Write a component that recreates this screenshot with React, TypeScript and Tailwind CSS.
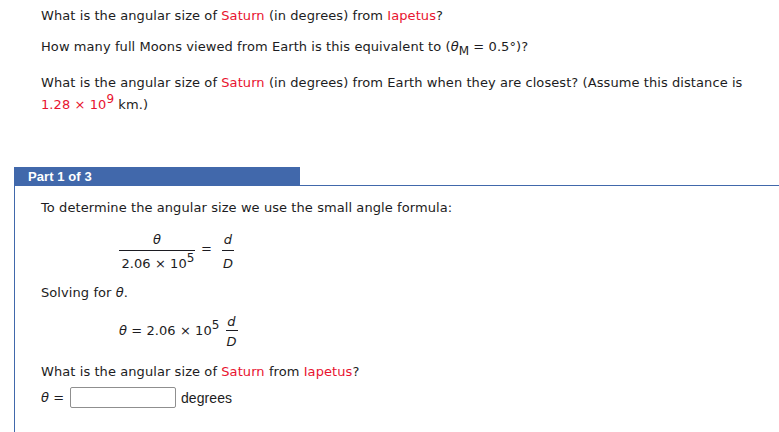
import React from "react";

const R = ({ children }: { children: React.ReactNode }) => (
  <span className="text-[#e8132f]">{children}</span>
);

const Th = () => <i className="font-['DejaVu_Sans']">θ</i>;

export default function App() {
  return (
    <div className="w-[779px] h-[432px] overflow-hidden bg-white text-[#1c1c22] text-[13px] leading-[16px] tracking-[0.08px] font-['DejaVu_Sans',sans-serif]">
      <div className="pl-[41px] pt-[8px]">
        <p>
          What is the angular size of <R>Saturn</R> (in degrees) from <R>Iapetus</R>?
        </p>
        <p className="mt-[15px]">
          How many full Moons viewed from Earth is this equivalent to (<Th />
          <sub className="text-[12px] relative top-[4px]">M</sub> = 0.5°)?
        </p>
        <p className="mt-[17px] leading-[22px]">
          What is the angular size of <R>Saturn</R> (in degrees) from Earth when they are closest? (Assume this distance is
          <br />
          <R>
            1.28 × 10<sup className="text-[12px] relative -top-[6px]">9</sup>
          </R>{" "}
          km.)
        </p>
      </div>

      <div className="mt-[51px] flex items-end pl-[14px]">
        <div className="w-[286px] h-[19px] bg-[#4168ab] pl-[14px] text-white font-bold font-['Liberation_Sans',sans-serif] text-[13px] leading-[20px]">
          Part 1 of 3
        </div>
        <div className="flex-1 h-[1px] bg-[#4168ab]" />
      </div>

      <div className="ml-[14px] border-l border-[#4168ab] pl-[26px] pt-[14px] h-[260px]">
        <p>To determine the angular size we use the small angle formula:</p>

        <div className="mt-[15px] ml-[78px] flex items-center">
          <div className="inline-flex flex-col items-center">
            <div className="h-[19px] leading-[17px]">
              <Th />
            </div>
            <div className="w-[76px] h-[1px] bg-[#1c1c22]" />
            <div className="h-[20px] leading-[26px] pl-[2px]">
              2.06 × 10<sup className="text-[12px] relative -top-[6px]">5</sup>
            </div>
          </div>
          <span className="ml-[6px] mr-[10px] mb-[4px]">=</span>
          <div className="inline-flex flex-col items-center">
            <div className="h-[19px] leading-[17px] italic">d</div>
            <div className="w-[12px] h-[1px] bg-[#1c1c22]" />
            <div className="h-[20px] leading-[26px] italic">D</div>
          </div>
        </div>

        <p className="mt-[14px]">
          Solving for <Th />.
        </p>

        <div className="mt-[13px] ml-[78px] flex items-center">
          <span className="mb-[2px]">
            <Th /> = 2.06 × 10<sup className="text-[12px] relative -top-[6px]">5</sup>
          </span>
          <div className="ml-[6px] inline-flex flex-col items-center">
            <div className="h-[16px] leading-[16px] italic">d</div>
            <div className="w-[12px] h-[1px] bg-[#1c1c22]" />
            <div className="h-[18px] leading-[22px] italic">D</div>
          </div>
        </div>

        <p className="mt-[15px]">
          What is the angular size of <R>Saturn</R> from <R>Iapetus</R>?
        </p>

        <div className="mt-[7px] flex items-center">
          <span className="w-[29px]">
            <Th /> =
          </span>
          <div className="w-[106px] h-[21px] border border-[#8f8f8f] rounded-[2px] bg-white" />
          <span className="ml-[5px] font-['Liberation_Sans',sans-serif] text-[14px]">degrees</span>
        </div>
      </div>
    </div>
  );
}
